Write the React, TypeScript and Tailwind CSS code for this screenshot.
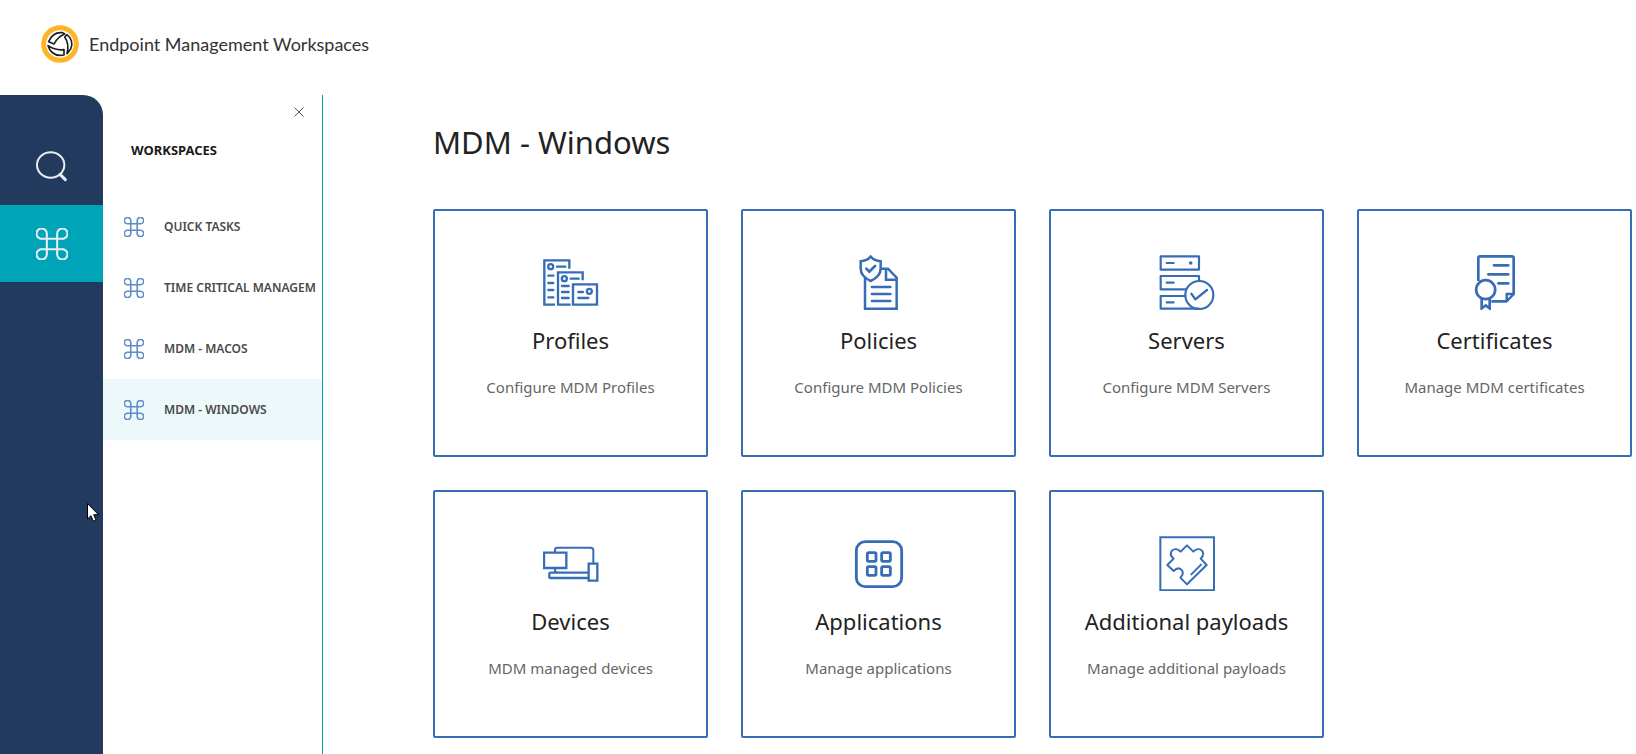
import { useState } from "react";

const ProfilesIcon = () => (
  <svg className="w-14 h-14" viewBox="55 41 168 168" fill="none" stroke="currentColor" strokeWidth={7}>
    <path d="M91 193H59V60H134V85M138 193H100V96H174V120M145 132H217V193H145Z" />
    <circle cx="78" cy="79" r="7.5" />
    <circle cx="119" cy="115" r="7.5" />
    <circle cx="194" cy="153" r="7.5" />
    <g strokeLinecap="round">
      <path d="M97 79H122M138 115H162M71 106H86M71 128H86M71 149H86M71 171H86" />
      <path d="M112 137H132M112 155H132M112 173H132M161 155H175M161 173H191" />
    </g>
  </svg>
);

const PoliciesIcon = () => (
  <svg className="w-14 h-14" viewBox="48 41 168 168" fill="none" stroke="currentColor" strokeWidth={7.5}>
    <path d="M90 112V205H185V112L159 85H138M153 85V118H185" />
    <path d="M107 49C98 59 89 62 77 63V84C77 102 89 114 107 122C125 114 137 102 137 84V63C125 62 116 59 107 49Z" />
    <path d="M94 85L103 94L120 77" strokeLinecap="round" strokeWidth={8} />
    <path d="M111 140H166M111 161H166M111 182H166" strokeLinecap="round" strokeWidth={8} />
  </svg>
);

const ServersIcon = () => (
  <svg className="w-14 h-14" viewBox="43 41 168 168" fill="none" stroke="currentColor" strokeWidth={6.5} strokeLinejoin="round">
    <path d="M48 48H163V88H48ZM163 122V107H48V147H124M122 167H48V205H164" />
    <circle cx="164" cy="164" r="42" />
    <path d="M140 160L152 177L187 149" strokeLinecap="round" strokeWidth={7} />
    <path d="M66 68H87M66 127H87M66 186H87" strokeLinecap="round" />
    <circle cx="138" cy="68" r="5.5" fill="currentColor" stroke="none" />
  </svg>
);

const CertificatesIcon = () => (
  <svg className="w-14 h-14" viewBox="51 41 168 168" fill="none" stroke="currentColor" strokeWidth={8}>
    <path d="M85 122V53Q85 48 90 48H185Q191 48 191 54V161L169 183H124" />
    <path d="M191 160H169V183Z" fill="currentColor" strokeWidth={5} strokeLinejoin="round" />
    <path d="M174 174V165H183Z" fill="white" stroke="none" />
    <circle cx="107" cy="148" r="28.5" />
    <path d="M95 176V204L107 195L119 204V176" strokeWidth={8} />
    <path d="M132 75H175M115 102H175M145 129H175" strokeLinecap="round" strokeWidth={8} />
  </svg>
);

const DevicesIcon = () => (
  <svg className="w-14 h-14" viewBox="55 43 168 168" fill="none" stroke="currentColor" strokeWidth={7}>
    <path d="M91 95V88Q91 81 98 81H198Q206 81 206 89V128M91 143V149Q91 155 97 155" strokeWidth={6} />
    <path d="M58 96H125V142H58Z" />
    <path d="M190 156H78Q74 156 74 160V168Q74 172 78 172H190" />
    <path d="M192 129H218V180H192Z" />
  </svg>
);

const ApplicationsIcon = () => (
  <svg className="w-14 h-14" viewBox="978 43 168 168" fill="none" stroke="currentColor" strokeWidth={8.5}>
    <rect x="994" y="63" width="136" height="135" rx="27" />
    <rect x="1027" y="96" width="26" height="26" rx="4" />
    <rect x="1070" y="96" width="26" height="26" rx="4" />
    <rect x="1027" y="138" width="26" height="26" rx="4" />
    <rect x="1070" y="138" width="26" height="26" rx="4" />
  </svg>
);

const PayloadsIcon = () => (
  <svg className="w-14 h-14" viewBox="42 44 168 168" fill="none" stroke="currentColor" strokeWidth={6}>
    <path d="M46 51H207V210H46Z" />
    <path
      strokeLinejoin="round"
      d="M126 75L145 94C152 87 163 83 171 91C178 99 174 108 167 115L185 134L126 192L106 172C114 164 117 155 109 148C102 141 93 145 86 152L67 134L86 115C78 108 74 99 81 91C89 83 100 87 107 94Z"
    />
    <path d="M139 162L168 133" strokeLinecap="round" />
  </svg>
);

const CommandIcon = ({ className, strokeWidth }: { className: string; strokeWidth: number }) => (
  <svg className={className} viewBox="0 0 62 62" fill="none" stroke="currentColor" strokeWidth={strokeWidth}>
    <path d="M21 21V12A10 10 0 1 0 12 21H50A10 10 0 1 0 41 12V50A10 10 0 1 0 50 41H12A10 10 0 1 0 21 50Z" />
  </svg>
);

const Logo = () => (
  <svg className="w-[38px] h-[38px]" viewBox="0 0 114 114" fill="none">
    <circle cx="57" cy="57" r="49" stroke="#fdb525" strokeWidth={15} fill="white" />
    <g stroke="#1f1f1f" strokeWidth={5} strokeLinejoin="round">
      <path d="M23 50C30 32 45 21 65 23L71 27C57 33 46 43 39 57Z" />
      <path d="M71 36L78 29C91 39 97 56 89 72L78 86C83 67 82 51 71 36Z" />
      <path d="M21 62C25 78 39 91 57 91L69 90V74C52 76 36 72 21 62Z" />
    </g>
  </svg>
);

const workspaces = ["Quick Tasks", "Time Critical Managem", "MDM - macOS", "MDM - Windows"];

const cards = [
  { title: "Profiles", description: "Configure MDM Profiles", Icon: ProfilesIcon },
  { title: "Policies", description: "Configure MDM Policies", Icon: PoliciesIcon },
  { title: "Servers", description: "Configure MDM Servers", Icon: ServersIcon },
  { title: "Certificates", description: "Manage MDM certificates", Icon: CertificatesIcon },
  { title: "Devices", description: "MDM managed devices", Icon: DevicesIcon },
  { title: "Applications", description: "Manage applications", Icon: ApplicationsIcon },
  { title: "Additional payloads", description: "Manage additional payloads", Icon: PayloadsIcon },
];

const App = () => {
  const [active, setActive] = useState("MDM - Windows");
  const [panelOpen, setPanelOpen] = useState(true);

  return (
    <div className="relative min-h-screen flex flex-col bg-white font-['Noto_Sans',sans-serif] text-[#222]">
      <header className="flex items-center gap-[10px] h-[95px] pl-[41px] pb-[7px]">
        <Logo />
        <span className="font-['Lato',sans-serif] text-lg text-[#333]">Endpoint Management Workspaces</span>
      </header>

      <div className="flex flex-1">
        {/* Icon rail */}
        <nav className="w-[103px] shrink-0 rounded-tr-[20px] bg-[#223a5e] pt-[33px] text-[#e9edf2]">
          <button aria-label="Search" className="w-full h-[77px] flex items-center justify-center">
            <svg className="w-8 h-8" viewBox="0 0 96 96" fill="none" stroke="currentColor" strokeWidth={6} strokeLinecap="round">
              <ellipse cx="44" cy="42" rx="41" ry="38" />
              <path d="M72 70L88 86" strokeWidth={9} />
            </svg>
          </button>
          <button
            aria-label="Workspaces"
            onClick={() => setPanelOpen(true)}
            className="w-full h-[77px] flex items-center justify-center bg-[#00a4b8]"
          >
            <CommandIcon className="w-8 h-8" strokeWidth={4} />
          </button>
        </nav>

        {/* Workspaces panel */}
        {panelOpen && (
          <aside className="w-[220px] shrink-0 border-r border-[#00a4b4]">
            <div className="flex justify-end pt-3 pr-[18px]">
              <button aria-label="Close" onClick={() => setPanelOpen(false)} className="text-[#555]">
                <svg className="w-[10px] h-[10px]" viewBox="0 0 10 10" stroke="currentColor">
                  <path d="M0.5 0.5L9.5 9.5M9.5 0.5L0.5 9.5" />
                </svg>
              </button>
            </div>
            <h2 className="mt-[23px] pl-7 text-[13px] leading-5 font-bold uppercase text-[#1a1a1a]">Workspaces</h2>
            <ul className="mt-9">
              {workspaces.map((name) => (
                <li key={name} className={name === active ? "bg-[#ecf8fa]" : ""}>
                  <button
                    onClick={() => setActive(name)}
                    className="w-full h-[61px] flex items-center gap-5 pl-[21px] text-left"
                  >
                    <CommandIcon className="w-5 h-5 shrink-0 text-[#5f8cc4]" strokeWidth={5} />
                    <span className="whitespace-nowrap text-xs font-semibold uppercase text-[#4a4a4a]">
                      {name}
                    </span>
                  </button>
                </li>
              ))}
            </ul>
          </aside>
        )}

        <main className="flex-1 min-w-0 pt-[25px] pl-[110px] pr-1">
          <h1 className="text-[31px] leading-11">MDM - Windows</h1>
          <div className="mt-[45px] grid grid-cols-4 gap-[33px]">
            {cards.map(({ title, description, Icon }) => (
              <a
                key={title}
                href="#"
                className="flex flex-col items-center rounded-xs border-2 border-[#366db5] pt-[43px] pb-14 text-center"
              >
                <span className="text-[#366db5]">
                  <Icon />
                </span>
                <span className="mt-[14px] text-[22px] leading-8">{title}</span>
                <span className="mt-[19px] text-[15px] leading-6 text-[#666]">{description}</span>
              </a>
            ))}
          </div>
        </main>
      </div>

      {/* Mouse pointer */}
      <svg className="absolute left-[87px] top-[503px] w-3 h-5" viewBox="0 0 12 20">
        <path d="M0.5 0.5V16L4 12.7L6.3 18.2L9 17L6.7 11.7H11.5Z" fill="white" stroke="black" />
      </svg>
    </div>
  );
};

export default App;
